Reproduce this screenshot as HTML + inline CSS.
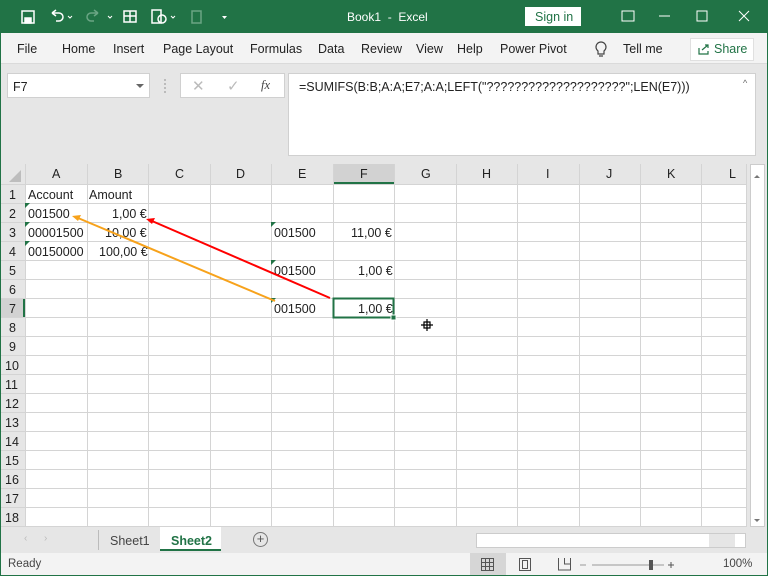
<!DOCTYPE html>
<html><head><meta charset="utf-8"><style>
*{margin:0;padding:0;box-sizing:border-box}
body{width:768px;height:576px;overflow:hidden;background:#e6e6e6;font-family:"Liberation Sans",sans-serif;position:relative;font-size:12px;color:#222}
.a{position:absolute}
.t{position:absolute;font-size:12.5px;color:#222;white-space:nowrap}
</style></head><body>
<div class="a" style="left:0;top:0;width:768px;height:33px;background:#217346"></div>
<div class="t" style="left:347px;top:10px;color:#fff;font-size:12px">Book1&nbsp;&nbsp;-&nbsp;&nbsp;Excel</div>
<div class="a" style="left:525px;top:7px;width:56px;height:19px;background:#fff"></div>
<div class="t" style="left:535px;top:10px;color:#217346;font-size:12.5px">Sign in</div>
<svg class="a" style="left:0;top:0" width="768" height="33">
<g fill="none" stroke="#fff" stroke-width="1.5">
<rect x="22" y="11" width="12" height="12"/><rect x="25" y="18" width="6" height="5" fill="#fff"/>
<path d="M52 13 l4 -3 M52 13 l4 3 M52 13 h7 a4 4 0 0 1 0 8 h-3"/>
<path d="M98 13 l-4 -3 M98 13 l-4 3 M98 13 h-7 a4 4 0 0 0 0 8 h3" stroke="#6aa584"/>
<rect x="124" y="11" width="12" height="11"/><path d="M124 16h12M130 11v11"/>
<rect x="152" y="10" width="9" height="13"/><circle cx="162" cy="19" r="4"/>
<rect x="192" y="11" width="9" height="12" stroke="#6aa584"/>
<path d="M222 16h5l-2.5 3z" fill="#fff" stroke="none"/>
<path d="M68 16l2 2 2-2M108 16l2 2 2-2M171 16l2 2 2-2" stroke-width="1"/>
<rect x="622" y="11" width="12" height="10" stroke-width="1"/>
<path d="M659 16h11M697 11h10v10h-10zM739 11l10 10M749 11l-10 10" stroke-width="1"/>
</g></svg>
<div class="a" style="left:0;top:33px;width:768px;height:31px;background:#f3f3f3;border-bottom:1px solid #dadada"></div>
<div class="t" style="left:17px;top:42px">File</div>
<div class="t" style="left:62px;top:42px">Home</div>
<div class="t" style="left:113px;top:42px">Insert</div>
<div class="t" style="left:163px;top:42px">Page Layout</div>
<div class="t" style="left:250px;top:42px">Formulas</div>
<div class="t" style="left:318px;top:42px">Data</div>
<div class="t" style="left:361px;top:42px">Review</div>
<div class="t" style="left:416px;top:42px">View</div>
<div class="t" style="left:457px;top:42px">Help</div>
<div class="t" style="left:500px;top:42px">Power Pivot</div>
<div class="t" style="left:623px;top:42px">Tell me</div>
<svg class="a" style="left:594px;top:40px" width="16" height="18"><path d="M4 11a5 5 0 1 1 6 0v3h-6z M5 16h4" fill="none" stroke="#444" stroke-width="1.2"/></svg>
<div class="a" style="left:690px;top:38px;width:64px;height:23px;background:#fff;border:1px solid #e0e0e0"></div>
<div class="t" style="left:714px;top:42px;color:#217346">Share</div>
<svg class="a" style="left:697px;top:42px" width="14" height="14"><path d="M2 6v6h9v-3M5 8l6-5M8 3h3v3" fill="none" stroke="#217346" stroke-width="1.2"/></svg>
<div class="a" style="left:7px;top:73px;width:143px;height:25px;background:#fff;border:1px solid #d0d0d0"></div>
<div class="t" style="left:13px;top:80px">F7</div>
<div class="a" style="left:136px;top:84px;border:4px solid transparent;border-top:4px solid #666;width:0;height:0"></div>
<div class="a" style="left:164px;top:79px;width:2px;height:14px;border-left:2px dotted #bbb"></div>
<div class="a" style="left:180px;top:73px;width:105px;height:25px;background:#fff;border:1px solid #d0d0d0"></div>
<div class="t" style="left:192px;top:77px;color:#bbb;font-size:15px">✕</div>
<div class="t" style="left:227px;top:77px;color:#bbb;font-size:15px">✓</div>
<div class="t" style="left:261px;top:78px;font-family:'Liberation Serif',serif;font-style:italic;color:#444">fx</div>
<div class="a" style="left:288px;top:73px;width:468px;height:83px;background:#fff;border:1px solid #d0d0d0"></div>
<div class="t" style="left:299px;top:80px">=SUMIFS(B:B;A:A;E7;A:A;LEFT("????????????????????";LEN(E7)))</div>
<div class="t" style="left:743px;top:78px;font-size:9px;color:#666">^</div>
<div class="a" style="left:0;top:164px;width:747px;height:363px;background:#fff"></div>
<div class="a" style="left:0;top:164px;width:747px;height:20px;background:#e6e6e6"></div>
<div class="a" style="left:0;top:164px;width:25px;height:363px;background:#e6e6e6"></div>
<div class="a" style="left:333px;top:164px;width:61px;height:20px;background:#d2d2d2;border-bottom:2px solid #217346"></div>
<div class="a" style="left:0;top:299px;width:25px;height:19px;background:#d2d2d2;border-right:2px solid #217346"></div>
<svg class="a" style="left:0;top:164px" width="747" height="363">
<g stroke="#d4d4d4" stroke-width="1">
<path d="M25.5 0V363M87.5 0V363M148.5 0V363M210.5 0V363M271.5 0V363M333.5 0V363M394.5 0V363M456.5 0V363M517.5 0V363M579.5 0V363M640.5 0V363M701.5 0V363M746.5 0V363"/>
<path d="M0 20.5H747M0 39.5H747M0 58.5H747M0 77.5H747M0 96.5H747M0 115.5H747M0 134.5H747M0 153.5H747M0 172.5H747M0 191.5H747M0 210.5H747M0 229.5H747M0 248.5H747M0 267.5H747M0 286.5H747M0 305.5H747M0 324.5H747M0 343.5H747M0 362.5H747"/>
</g>
<path d="M21 6V18H9z" fill="#bdbdbd"/>
<g fill="#217346"><path d="M25 39h5l-5 5zM25 58h5l-5 5zM25 77h5l-5 5zM271 58h5l-5 5zM271 96h5l-5 5zM271 134h5l-5 5z"/></g>
<rect x="333.5" y="134.5" width="60" height="19" fill="none" stroke="#217346" stroke-width="2"/>
<rect x="391" y="151" width="5" height="5" fill="#217346" stroke="#fff"/>
</svg>
<div style="position:absolute;left:0;top:167px;font-size:12.5px;color:#333">
<div class="t" style="left:52px">A</div><div class="t" style="left:114px">B</div><div class="t" style="left:175px">C</div><div class="t" style="left:236px">D</div><div class="t" style="left:298px">E</div><div class="t" style="left:360px">F</div><div class="t" style="left:421px">G</div><div class="t" style="left:482px">H</div><div class="t" style="left:546px">I</div><div class="t" style="left:606px">J</div><div class="t" style="left:667px">K</div><div class="t" style="left:729px">L</div>
</div>
<div style="position:absolute;left:0;top:188px;font-size:12.5px;color:#333">
<div class="t" style="left:9px;top:0">1</div><div class="t" style="left:9px;top:19px">2</div><div class="t" style="left:9px;top:38px">3</div><div class="t" style="left:9px;top:57px">4</div><div class="t" style="left:9px;top:76px">5</div><div class="t" style="left:9px;top:95px">6</div><div class="t" style="left:9px;top:114px">7</div><div class="t" style="left:9px;top:133px">8</div><div class="t" style="left:9px;top:152px">9</div><div class="t" style="left:5px;top:171px">10</div><div class="t" style="left:5px;top:190px">11</div><div class="t" style="left:5px;top:209px">12</div><div class="t" style="left:5px;top:228px">13</div><div class="t" style="left:5px;top:247px">14</div><div class="t" style="left:5px;top:266px">15</div><div class="t" style="left:5px;top:285px">16</div><div class="t" style="left:5px;top:304px">17</div><div class="t" style="left:5px;top:323px">18</div>
<div class="t" style="left:28px;top:0">Account</div><div class="t" style="left:89px;top:0">Amount</div>
<div class="t" style="left:28px;top:19px">001500</div><div class="t" style="left:112px;top:19px">1,00 €</div>
<div class="t" style="left:28px;top:38px">00001500</div><div class="t" style="left:105px;top:38px">10,00 €</div>
<div class="t" style="left:28px;top:57px">00150000</div><div class="t" style="left:99px;top:57px">100,00 €</div>
<div class="t" style="left:274px;top:38px">001500</div><div class="t" style="left:351px;top:38px">11,00 €</div>
<div class="t" style="left:274px;top:76px">001500</div><div class="t" style="left:358px;top:76px">1,00 €</div>
<div class="t" style="left:274px;top:114px">001500</div><div class="t" style="left:358px;top:114px">1,00 €</div>
</div>
<svg class="a" style="left:0;top:0" width="768" height="576">
<path d="M330 298L152 221" stroke="#f00" stroke-width="2"/><path d="M146 219l9-1-3 6z" fill="#f00"/>
<path d="M275 301L78 218" stroke="#f7a21b" stroke-width="2"/><path d="M72 216l9-1-3 6z" fill="#f7a21b"/>
<path d="M424 322h6v6h-6zM427 319v12M421 325h12" stroke="#000" stroke-width="1.2" fill="#fff"/>
</svg>
<div class="a" style="left:750px;top:164px;width:15px;height:363px;background:#fff;border:1px solid #ccc"></div>
<div class="a" style="left:754px;top:172px;border:3px solid transparent;border-bottom:3px solid #777;width:0;height:0"></div>
<div class="a" style="left:754px;top:519px;border:3px solid transparent;border-top:3px solid #777;width:0;height:0"></div>
<div class="a" style="left:0;top:527px;width:768px;height:26px;background:#e6e6e6"></div>
<div class="t" style="left:24px;top:533px;color:#bbb;font-size:10px">‹&nbsp;&nbsp;&nbsp;&nbsp;&nbsp;&nbsp;›</div>
<div class="a" style="left:98px;top:530px;width:1px;height:20px;background:#bbb"></div>
<div class="t" style="left:110px;top:534px;color:#444">Sheet1</div>
<div class="a" style="left:160px;top:527px;width:61px;height:24px;background:#fff;border-bottom:2px solid #217346"></div>
<div class="t" style="left:171px;top:534px;color:#217346;font-weight:bold">Sheet2</div>
<div class="a" style="left:253px;top:532px;width:15px;height:15px;border:1px solid #777;border-radius:50%;text-align:center;line-height:12px;font-size:13px;color:#555">+</div>
<div class="a" style="left:476px;top:533px;width:270px;height:15px;background:#fff;border:1px solid #ccc"></div>
<div class="a" style="left:709px;top:534px;width:26px;height:13px;background:#e6e6e6"></div>
<div class="a" style="left:0;top:553px;width:768px;height:23px;background:#f3f3f3"></div>
<div class="t" style="left:8px;top:558px;font-size:11.5px;color:#444">Ready</div>
<div class="a" style="left:470px;top:553px;width:36px;height:23px;background:#d6d6d6"></div>
<svg class="a" style="left:480px;top:557px" width="200" height="15"><g fill="none" stroke="#555"><rect x="1.5" y="1.5" width="12" height="12"/><path d="M5.5 1v13M9.5 1v13M1 5.5h13M1 9.5h13"/><rect x="39.5" y="1.5" width="11" height="12"/><rect x="42.5" y="3.5" width="5" height="8"/><path d="M78.5 1v12h12V1M84.5 1v6h6"/><path d="M100 8h6M112 8h72" stroke="#999"/><path d="M188 8h6M191 5v6"/></g><rect x="169" y="3" width="4" height="10" fill="#555"/></svg>
<div class="t" style="left:723px;top:558px;font-size:11.5px;color:#444">100%</div>
<div class="a" style="left:0;top:33px;width:1px;height:543px;background:#217346"></div>
<div class="a" style="left:767px;top:33px;width:1px;height:543px;background:#217346"></div>
<div class="a" style="left:0;top:575px;width:768px;height:1px;background:#217346"></div>
</body></html>
